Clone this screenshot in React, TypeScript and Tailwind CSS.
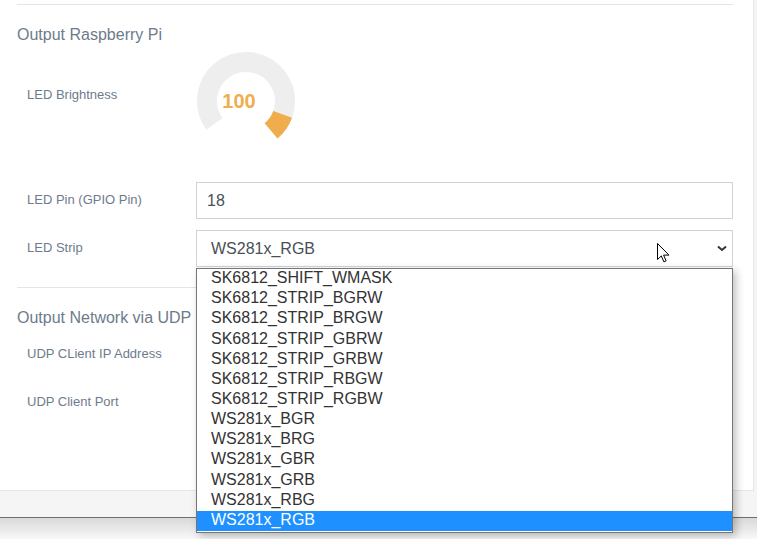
import React from "react";

const options = [
  "SK6812_SHIFT_WMASK",
  "SK6812_STRIP_BGRW",
  "SK6812_STRIP_BRGW",
  "SK6812_STRIP_GBRW",
  "SK6812_STRIP_GRBW",
  "SK6812_STRIP_RBGW",
  "SK6812_STRIP_RGBW",
  "WS281x_BGR",
  "WS281x_BRG",
  "WS281x_GBR",
  "WS281x_GRB",
  "WS281x_RBG",
  "WS281x_RGB",
];

// knob gauge: grey track with the orange cursor at the max end
function Knob() {
  return (
    <div className="relative w-[100px] h-[100px] shrink-0">
      <svg width="100" height="100" viewBox="0 0 100 100" fill="none">
        <path
          d="M18.45 72.93 A39 39 0 1 1 75.07 79.88"
          stroke="#eeeeee"
          strokeWidth="20"
        />
        <path
          d="M86.65 63.34 A39 39 0 0 1 75.07 79.88"
          stroke="#f0ad4e"
          strokeWidth="20"
        />
      </svg>
      <div className="absolute left-[26px] top-[39px] w-[34px] text-center text-[20px] leading-[22px] font-bold text-[#f0ad4e]">
        100
      </div>
    </div>
  );
}

function Row({
  label,
  children,
  className = "",
  labelClass = "",
}: {
  label: string;
  children: React.ReactNode;
  className?: string;
  labelClass?: string;
}) {
  return (
    <div className={`flex items-center ${className}`}>
      <div
        className={`w-[179px] pl-[10px] text-[13px] text-[#6d7b8c] shrink-0 ${labelClass}`}
      >
        {label}
      </div>
      {children}
    </div>
  );
}

export default function App() {
  return (
    <div className="relative w-[757px] h-[539px] overflow-hidden bg-[#f5f5f5] font-['Liberation_Sans',Arial,sans-serif]">
      <div className="h-[517px]">
        <div className="w-[754px] h-[491px] bg-white border-r border-b border-[#e6e6e6] pl-[17px] pr-[20px] pt-[4px]">
          <div className="border-t border-[#e5e5e5]" />
          <h3 className="mt-[18px] text-[16px] leading-[24px] text-[#6d7b8c]">
            Output Raspberry Pi
          </h3>

          <div className="mt-[4px] flex items-start">
            <div className="w-[179px] pl-[10px] pt-[34px] text-[13px] leading-[20px] text-[#6d7b8c] shrink-0">
              LED Brightness
            </div>
            <Knob />
          </div>

          <Row
            label="LED Pin (GPIO Pin)"
            className="mt-[31px]"
            labelClass="pb-[2px]"
          >
            <div className="flex-1 h-[37px] border border-[#ced4da] flex items-center px-[10px] text-[16px] text-[#495057]">
              18
            </div>
          </Row>

          <Row label="LED Strip" className="mt-[11px]" labelClass="pb-[2px]">
            <div className="flex-1 h-[37px] border border-[#ced4da] flex items-center justify-between pl-[14px] pr-[5px] text-[16px] text-[#495057]">
              <span>WS281x_RGB</span>
              <svg width="10" height="7" viewBox="0 0 10 7" fill="none">
                <path
                  d="M1 1.5l4 3.5 4-3.5"
                  stroke="#333"
                  strokeWidth="2"
                />
              </svg>
            </div>
          </Row>

          <div className="mt-[20px] border-t border-[#e5e5e5]" />
          <h3 className="mt-[18px] text-[16px] leading-[24px] text-[#6d7b8c]">
            Output Network via UDP
          </h3>

          <Row label="UDP CLient IP Address" className="mt-[5px]">
            <div className="flex-1 h-[37px] border border-[#ced4da]" />
          </Row>
          <Row label="UDP Client Port" className="mt-[11px]">
            <div className="flex-1 h-[37px] border border-[#ced4da]" />
          </Row>
        </div>
      </div>
      <div className="h-px bg-[#6f6f6f]" />
      <div className="h-[21px] bg-gradient-to-b from-[#d9d9d9] to-[#f8f8f8]" />

      {/* open select popup */}
      <div className="absolute left-[196px] top-[268px] w-[537px] h-[265px] bg-white border border-[#767676] shadow-[3px_3px_8px_rgba(0,0,0,0.25)] flex flex-col">
        {options.map((o) => (
          <div
            key={o}
            className={`flex-1 flex items-center pl-[14px] pb-[2px] text-[16px] leading-[18px] ${
              o === "WS281x_RGB"
                ? "bg-[#1e90ff] text-white"
                : "text-[#333]"
            }`}
          >
            {o}
          </div>
        ))}
        <div className="h-px" />
      </div>

      {/* mouse pointer */}
      <svg
        className="absolute left-[657px] top-[243px]"
        width="13"
        height="20"
        viewBox="0 0 13 20"
        fill="none"
      >
        <path
          d="M0.5 0.5v16l3.8-3.6 2.6 6 2.2-1-2.5-5.8h5.4z"
          fill="#fff"
          stroke="#000"
          strokeWidth="1"
          strokeLinejoin="round"
        />
      </svg>
    </div>
  );
}
